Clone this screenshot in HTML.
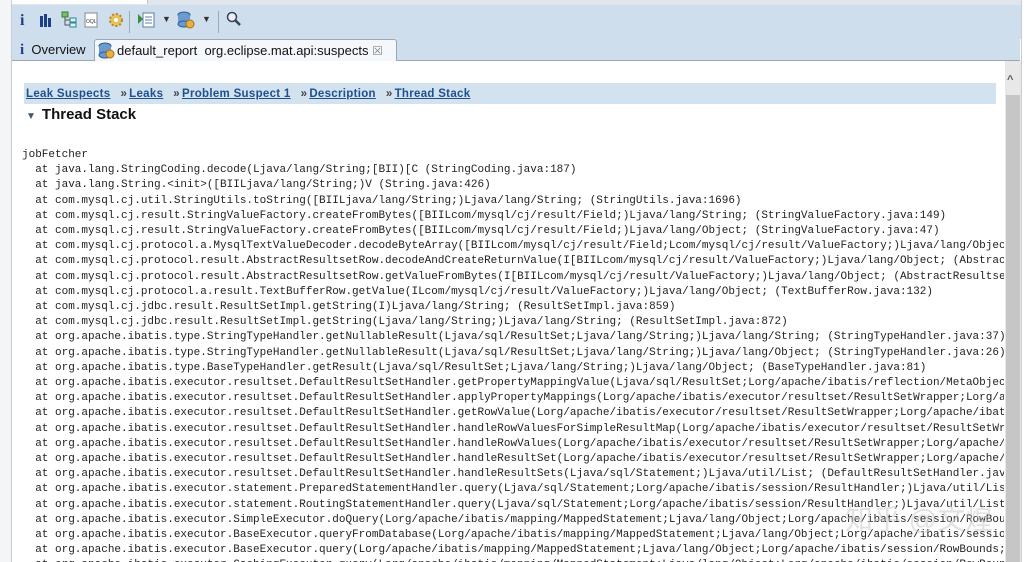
<!DOCTYPE html>
<html><head><meta charset="utf-8"><style>
*{margin:0;padding:0;box-sizing:border-box}
body{width:1036px;height:562px;overflow:hidden;background:#fff;position:relative;font-family:"Liberation Sans",sans-serif}
.abs{position:absolute}
#top{left:0;top:0;width:1036px;height:5px;background:#dfe6ee}
#topw{left:0;top:0;width:148px;height:4px;background:#fff;border-right:1px solid #b9c4cf}
#tb{left:12px;top:5px;width:1010px;height:34px;background:#cfdeed}
#tabs{left:12px;top:39px;width:1008px;height:22px;background:#cfdeed;border-bottom:1px solid #9aa8b6}
.tab{position:absolute;top:0;height:22px;font-size:13px;line-height:21px;color:#111}
#t1{left:2px;width:80px;padding-left:6px}
#t2{left:82px;width:303px;background:#f4f8fc;border:1px solid #9aa8b6;border-bottom:none;border-radius:3px 3px 0 0;padding-left:22px}
#lb{left:0;top:0;width:12px;height:562px;background:#f3f5f7;border-right:1px solid #c5ced8}
#rb{left:1021px;top:0;width:15px;height:562px;background:#fff;border-left:1px solid #c5ced8}
#sb{left:1005px;top:61px;width:16px;height:501px;background:#e8e8e8}
#th{left:1006px;top:95px;width:14px;height:467px;background:#c6c6c6}
#bc{left:24px;top:83px;width:972px;height:21px;background:#d3e2ef;font-size:11.5px;font-weight:bold;line-height:22px;padding-left:2px;white-space:nowrap;letter-spacing:0.3px}
#bc a{color:#1f4f8f;text-decoration:underline}
#bc span{color:#444;margin:0 2px 0 10px}
#h{left:26px;top:106px;font-size:15px;font-weight:bold;color:#111}
#pre{left:22px;top:148px;width:982px;height:414px;overflow:hidden;font-family:"Liberation Mono",monospace;font-size:11px;line-height:15.2px;white-space:pre;color:#222}
.ic{position:absolute;top:12px;font-size:13px}
</style></head><body>
<div id="top" class="abs"></div><div id="topw" class="abs"></div>
<div id="lb" class="abs"></div>
<div id="tb" class="abs">
<span class="ic" style="left:8px;color:#1d3f8a;font-weight:bold;font-family:'Liberation Serif',serif;top:7px;font-size:16px">i</span>
<svg class="abs" style="left:27px;top:9px" width="14" height="13"><rect x="1" y="2" width="3" height="11" fill="#1d3f8a"/><rect x="5" y="0" width="3" height="13" fill="#1d3f8a"/><rect x="9" y="4" width="3" height="9" fill="#1d3f8a"/></svg>
<svg class="abs" style="left:49px;top:6px" width="16" height="17"><rect x="1" y="1" width="6" height="5" fill="#7bbf6a" stroke="#3b7a2f"/><rect x="9" y="7" width="6" height="4" fill="#cfe" stroke="#3b7a9f"/><rect x="9" y="12" width="6" height="4" fill="#cfe" stroke="#3b7a9f"/><path d="M4 6V14H9M4 9H9" stroke="#555" fill="none"/></svg>
<svg class="abs" style="left:72px;top:7px" width="14" height="16"><rect x="1" y="1" width="12" height="14" fill="#fff" stroke="#888"/><text x="2" y="11" font-size="5" font-family="Liberation Sans" fill="#234">OQL</text></svg>
<svg class="abs" style="left:95px;top:6px" width="18" height="18"><circle cx="9" cy="9" r="6" fill="#e9c15a" stroke="#b5852a" stroke-width="2" stroke-dasharray="2 2"/><circle cx="9" cy="9" r="2" fill="#fff"/></svg>
<div class="abs" style="left:117px;top:6px;width:1px;height:22px;background:#9ab"></div>
<svg class="abs" style="left:125px;top:7px" width="18" height="16"><path d="M1 2L6 7L1 12Z" fill="#3a8f3a"/><rect x="6" y="1" width="11" height="14" fill="#fff" stroke="#5a7fa8"/><path d="M8 5H15M8 8H15M8 11H15" stroke="#5a7fa8"/></svg>
<span class="abs" style="left:150px;top:9px;font-size:9px;color:#333">▼</span>
<svg class="abs" style="left:165px;top:6px" width="18" height="18"><ellipse cx="7" cy="4" rx="6" ry="3" fill="#6a9ad0" stroke="#2f5f9a"/><rect x="1" y="4" width="12" height="9" fill="#6a9ad0"/><ellipse cx="7" cy="13" rx="6" ry="3" fill="#6a9ad0" stroke="#2f5f9a"/><circle cx="13" cy="13" r="4" fill="#e9b040" stroke="#a5701a"/></svg>
<span class="abs" style="left:190px;top:9px;font-size:9px;color:#333">▼</span>
<div class="abs" style="left:206px;top:6px;width:1px;height:22px;background:#9ab"></div>
<svg class="abs" style="left:214px;top:6px" width="16" height="16"><circle cx="6" cy="6" r="4.5" fill="#eef" stroke="#345" stroke-width="1.5"/><path d="M9 9L14 14" stroke="#345" stroke-width="2.5"/></svg>
</div>
<div id="tabs" class="abs">
<div id="t1" class="tab"><b style="color:#1d3f8a;font-family:'Liberation Serif',serif;font-size:15px">i</b>&nbsp; Overview</div>
<div id="t2" class="tab"><svg class="abs" style="left:3px;top:2px" width="17" height="17"><ellipse cx="7" cy="4" rx="6" ry="3" fill="#6a9ad0" stroke="#2f5f9a"/><rect x="1" y="4" width="12" height="9" fill="#6a9ad0"/><ellipse cx="7" cy="13" rx="6" ry="3" fill="#6a9ad0" stroke="#2f5f9a"/><circle cx="12" cy="12" r="4" fill="#e9b040" stroke="#a5701a"/></svg>default_report&nbsp; org.eclipse.mat.api:suspects <span style="color:#888;font-size:12px">☒</span></div>
</div>
<div id="rb" class="abs"></div>
<div id="sb" class="abs"></div><div id="th" class="abs"></div>
<span class="abs" style="left:1007px;top:74px;font-size:11px;color:#555;font-weight:bold">^</span>
<div id="bc" class="abs"><a>Leak Suspects</a><span>»</span><a>Leaks</a><span>»</span><a>Problem Suspect 1</a><span>»</span><a>Description</a><span>»</span><a>Thread Stack</a></div>
<div id="h" class="abs"><span style="font-size:10px;color:#456;margin-right:6px">▼</span>Thread Stack</div>
<div id="pre" class="abs">jobFetcher
  at java.lang.StringCoding.decode(Ljava/lang/String;[BII)[C (StringCoding.java:187)
  at java.lang.String.&lt;init&gt;([BIILjava/lang/String;)V (String.java:426)
  at com.mysql.cj.util.StringUtils.toString([BIILjava/lang/String;)Ljava/lang/String; (StringUtils.java:1696)
  at com.mysql.cj.result.StringValueFactory.createFromBytes([BIILcom/mysql/cj/result/Field;)Ljava/lang/String; (StringValueFactory.java:149)
  at com.mysql.cj.result.StringValueFactory.createFromBytes([BIILcom/mysql/cj/result/Field;)Ljava/lang/Object; (StringValueFactory.java:47)
  at com.mysql.cj.protocol.a.MysqlTextValueDecoder.decodeByteArray([BIILcom/mysql/cj/result/Field;Lcom/mysql/cj/result/ValueFactory;)Ljava/lang/Object;
  at com.mysql.cj.protocol.result.AbstractResultsetRow.decodeAndCreateReturnValue(I[BIILcom/mysql/cj/result/ValueFactory;)Ljava/lang/Object; (AbstractResultsetRow.java)
  at com.mysql.cj.protocol.result.AbstractResultsetRow.getValueFromBytes(I[BIILcom/mysql/cj/result/ValueFactory;)Ljava/lang/Object; (AbstractResultsetRow.java)
  at com.mysql.cj.protocol.a.result.TextBufferRow.getValue(ILcom/mysql/cj/result/ValueFactory;)Ljava/lang/Object; (TextBufferRow.java:132)
  at com.mysql.cj.jdbc.result.ResultSetImpl.getString(I)Ljava/lang/String; (ResultSetImpl.java:859)
  at com.mysql.cj.jdbc.result.ResultSetImpl.getString(Ljava/lang/String;)Ljava/lang/String; (ResultSetImpl.java:872)
  at org.apache.ibatis.type.StringTypeHandler.getNullableResult(Ljava/sql/ResultSet;Ljava/lang/String;)Ljava/lang/String; (StringTypeHandler.java:37)
  at org.apache.ibatis.type.StringTypeHandler.getNullableResult(Ljava/sql/ResultSet;Ljava/lang/String;)Ljava/lang/Object; (StringTypeHandler.java:26)
  at org.apache.ibatis.type.BaseTypeHandler.getResult(Ljava/sql/ResultSet;Ljava/lang/String;)Ljava/lang/Object; (BaseTypeHandler.java:81)
  at org.apache.ibatis.executor.resultset.DefaultResultSetHandler.getPropertyMappingValue(Ljava/sql/ResultSet;Lorg/apache/ibatis/reflection/MetaObject;
  at org.apache.ibatis.executor.resultset.DefaultResultSetHandler.applyPropertyMappings(Lorg/apache/ibatis/executor/resultset/ResultSetWrapper;Lorg/apache
  at org.apache.ibatis.executor.resultset.DefaultResultSetHandler.getRowValue(Lorg/apache/ibatis/executor/resultset/ResultSetWrapper;Lorg/apache/ibatis
  at org.apache.ibatis.executor.resultset.DefaultResultSetHandler.handleRowValuesForSimpleResultMap(Lorg/apache/ibatis/executor/resultset/ResultSetWrapper
  at org.apache.ibatis.executor.resultset.DefaultResultSetHandler.handleRowValues(Lorg/apache/ibatis/executor/resultset/ResultSetWrapper;Lorg/apache/ibatis
  at org.apache.ibatis.executor.resultset.DefaultResultSetHandler.handleResultSet(Lorg/apache/ibatis/executor/resultset/ResultSetWrapper;Lorg/apache/ibatis
  at org.apache.ibatis.executor.resultset.DefaultResultSetHandler.handleResultSets(Ljava/sql/Statement;)Ljava/util/List; (DefaultResultSetHandler.java)
  at org.apache.ibatis.executor.statement.PreparedStatementHandler.query(Ljava/sql/Statement;Lorg/apache/ibatis/session/ResultHandler;)Ljava/util/List;
  at org.apache.ibatis.executor.statement.RoutingStatementHandler.query(Ljava/sql/Statement;Lorg/apache/ibatis/session/ResultHandler;)Ljava/util/List;
  at org.apache.ibatis.executor.SimpleExecutor.doQuery(Lorg/apache/ibatis/mapping/MappedStatement;Ljava/lang/Object;Lorg/apache/ibatis/session/RowBounds;
  at org.apache.ibatis.executor.BaseExecutor.queryFromDatabase(Lorg/apache/ibatis/mapping/MappedStatement;Ljava/lang/Object;Lorg/apache/ibatis/session/
  at org.apache.ibatis.executor.BaseExecutor.query(Lorg/apache/ibatis/mapping/MappedStatement;Ljava/lang/Object;Lorg/apache/ibatis/session/RowBounds;
  at org.apache.ibatis.executor.CachingExecutor.query(Lorg/apache/ibatis/mapping/MappedStatement;Ljava/lang/Object;Lorg/apache/ibatis/session/RowBounds;
</div>
<div class="abs" style="left:845px;top:498px;font-size:28px;color:rgba(200,200,200,0.55);font-family:'Liberation Sans','Noto Sans CJK SC',sans-serif">知乎 @文煌</div>
</body></html>
